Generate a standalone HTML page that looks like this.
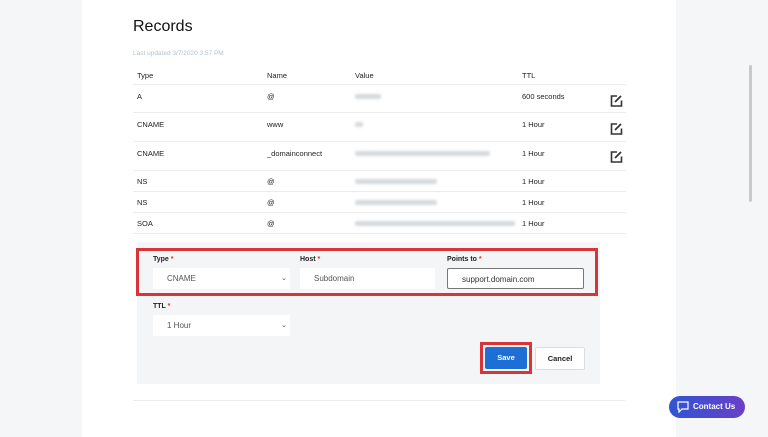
<!DOCTYPE html><html><head><style>
body{margin:0;width:768px;height:437px;background:#f4f6f8;font-family:"Liberation Sans",sans-serif;position:relative;overflow:hidden;color:#222}
.card{position:absolute;left:82px;top:0;width:594px;height:437px;background:#fff}
.a{position:absolute;font-size:7.5px;white-space:nowrap}
.ln{position:absolute;left:133px;width:493px;height:1px;background:#ececec}
.blur{position:absolute;height:5px;background:#d6dadd;border-radius:2px;filter:blur(1.2px)}
.in{position:absolute;background:#fff;height:21px;font-size:8px;color:#555;line-height:21px;box-sizing:border-box;padding-left:14px}
.ed{position:absolute;width:13px;height:13px}
</style></head><body>
<div class="card"></div>
<div style="position:absolute;left:749px;top:65px;width:3px;height:137px;background:#c9c9c9;border-radius:2px"></div>
<div class="a" style="left:133px;top:18px;font-size:16px;color:#111">Records</div>
<div class="a" style="left:133px;top:50px;font-size:6.5px;color:#b5c3cc">Last updated 3/7/2020 3:57 PM</div>
<div class="a" style="left:137px;top:71px">Type</div><div class="a" style="left:267px;top:71px">Name</div><div class="a" style="left:355px;top:71px">Value</div><div class="a" style="left:522px;top:71px">TTL</div>
<div class="ln" style="top:84px"></div><div class="ln" style="top:112px"></div><div class="ln" style="top:141px"></div><div class="ln" style="top:170px"></div><div class="ln" style="top:191px"></div><div class="ln" style="top:212px"></div><div class="ln" style="top:233px"></div>
<div class="a" style="left:137px;top:92px">A</div><div class="a" style="left:267px;top:92px">@</div><div class="blur" style="left:355px;top:94px;width:26px"></div><div class="a" style="left:522px;top:92px">600 seconds</div>
<div class="a" style="left:137px;top:120px">CNAME</div><div class="a" style="left:267px;top:120px">www</div><div class="blur" style="left:355px;top:122px;width:8px"></div><div class="a" style="left:522px;top:120px">1 Hour</div>
<div class="a" style="left:137px;top:149px">CNAME</div><div class="a" style="left:267px;top:149px">_domainconnect</div><div class="blur" style="left:355px;top:151px;width:135px"></div><div class="a" style="left:522px;top:149px">1 Hour</div>
<div class="a" style="left:137px;top:177px">NS</div><div class="a" style="left:267px;top:177px">@</div><div class="blur" style="left:355px;top:179px;width:82px"></div><div class="a" style="left:522px;top:177px">1 Hour</div>
<div class="a" style="left:137px;top:198px">NS</div><div class="a" style="left:267px;top:198px">@</div><div class="blur" style="left:355px;top:200px;width:82px"></div><div class="a" style="left:522px;top:198px">1 Hour</div>
<div class="a" style="left:137px;top:219px">SOA</div><div class="a" style="left:267px;top:219px">@</div><div class="blur" style="left:355px;top:221px;width:160px"></div><div class="a" style="left:522px;top:219px">1 Hour</div>
<svg class="ed" style="left:610px;top:94px" viewBox="0 0 13 13"><path d="M7 2H1.5v10h10V6.5" fill="none" stroke="#333" stroke-width="1.6"/><path d="M5 8l6-6" stroke="#333" stroke-width="1.8"/></svg>
<svg class="ed" style="left:610px;top:122px" viewBox="0 0 13 13"><path d="M7 2H1.5v10h10V6.5" fill="none" stroke="#333" stroke-width="1.6"/><path d="M5 8l6-6" stroke="#333" stroke-width="1.8"/></svg>
<svg class="ed" style="left:610px;top:150px" viewBox="0 0 13 13"><path d="M7 2H1.5v10h10V6.5" fill="none" stroke="#333" stroke-width="1.6"/><path d="M5 8l6-6" stroke="#333" stroke-width="1.8"/></svg>
<div style="position:absolute;left:137px;top:242px;width:463px;height:142px;background:#f3f5f7"></div>
<div style="position:absolute;left:136px;top:248px;width:462px;height:48px;border:3px solid #d9343a;box-sizing:border-box"></div>
<div class="a" style="left:153px;top:256px;font-size:7px;font-weight:bold">Type <span style="color:#d9343a">*</span></div>
<div class="a" style="left:300px;top:256px;font-size:7px;font-weight:bold">Host <span style="color:#d9343a">*</span></div>
<div class="a" style="left:447px;top:256px;font-size:7px;font-weight:bold">Points to <span style="color:#d9343a">*</span></div>
<div class="in" style="left:153px;top:268px;width:137px">CNAME<span style="position:absolute;right:3px;font-size:7px">⌄</span></div>
<div class="in" style="left:300px;top:268px;width:135px">Subdomain</div>
<div class="in" style="left:447px;top:268px;width:137px;border:1px solid #777;border-radius:2px;color:#333">support.domain.com</div>
<div class="a" style="left:153px;top:303px;font-size:7px;font-weight:bold">TTL <span style="color:#d9343a">*</span></div>
<div class="in" style="left:153px;top:315px;width:137px">1 Hour<span style="position:absolute;right:3px;font-size:7px">⌄</span></div>
<div style="position:absolute;left:480px;top:342px;width:52px;height:32px;border:3px solid #d9343a;box-sizing:border-box"></div>
<div style="position:absolute;left:485px;top:347px;width:42px;height:22px;background:#1d6fd6;border-radius:2px;color:#fff;font-size:7.5px;font-weight:bold;text-align:center;line-height:22px">Save</div>
<div style="position:absolute;left:535px;top:347px;width:48px;height:21px;background:#fff;border:1px solid #ddd;border-radius:2px;font-size:7.5px;font-weight:bold;text-align:center;line-height:21px">Cancel</div>
<div style="position:absolute;left:133px;top:400px;width:492px;height:1px;background:#ececec"></div>
<div style="position:absolute;left:669px;top:396px;width:76px;height:22px;border-radius:11px;background:linear-gradient(90deg,#2f55d4,#6a3fc8);color:#fff;font-size:8px;font-weight:bold;line-height:22px;box-sizing:border-box;padding-left:24px">Contact Us</div>
<svg style="position:absolute;left:677px;top:401px" width="12" height="12" viewBox="0 0 12 12"><path d="M1 1h10v7H5l-3 3V8H1z" fill="none" stroke="#fff" stroke-width="1.2"/></svg>
</body></html>
